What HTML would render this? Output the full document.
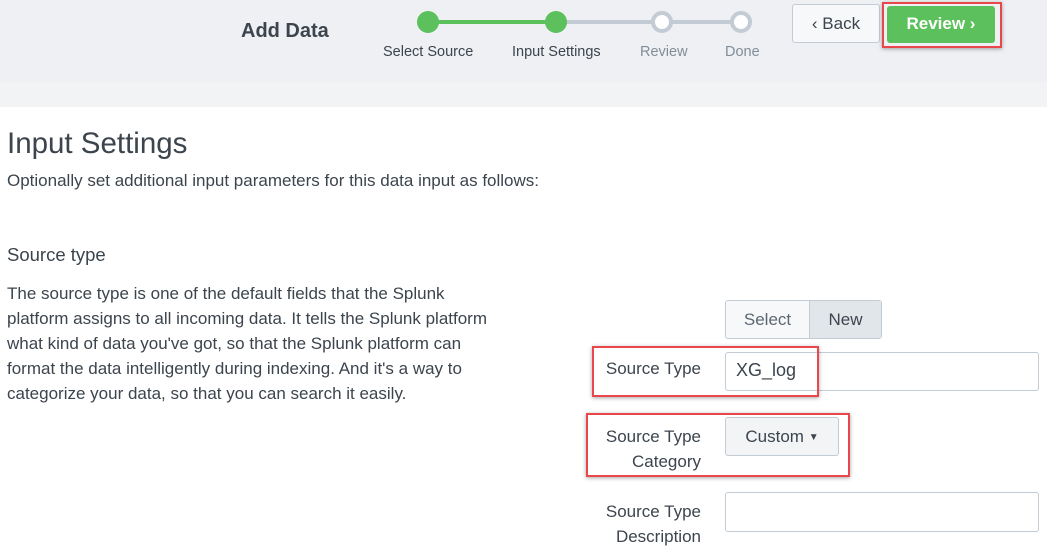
<!DOCTYPE html>
<html><head><style>
*{margin:0;padding:0;box-sizing:border-box}
body{width:1047px;height:549px;overflow:hidden;background:#fff;font-family:"Liberation Sans",sans-serif;color:#3c444d;position:relative}
.a{position:absolute}
.hdr{left:0;top:0;width:1047px;height:82px;background:#eef0f3;box-shadow:0 1px 3px rgba(0,0,0,.2)}
.band{left:0;top:82px;width:1047px;height:25px;background:#f2f3f5}
.lbl{font-size:14.5px;color:#5c6773}
.red{border:2px solid #e8474c;box-shadow:0 1px 4px rgba(0,0,0,.35)}
.inp{border:1px solid #c3cbd4;border-radius:3px;background:#fff}
.fl{font-size:17px;color:#3c444d;text-align:right;width:120px}
</style></head><body>
<div class="a hdr"></div>
<div class="a band"></div>
<div class="a" style="left:241px;top:20px;font-size:20px;font-weight:bold;color:#3c444d">Add Data</div>
<div class="a" style="left:428px;top:20px;width:128px;height:4px;background:#5cc05c"></div>
<div class="a" style="left:556px;top:20px;width:185px;height:4px;background:#c3cbd4"></div>
<div class="a" style="left:417px;top:11px;width:22px;height:22px;border-radius:50%;background:#5cc05c"></div>
<div class="a" style="left:545px;top:11px;width:22px;height:22px;border-radius:50%;background:#5cc05c"></div>
<div class="a" style="left:651px;top:11px;width:22px;height:22px;border-radius:50%;background:#fff;border:4px solid #c3cbd4"></div>
<div class="a" style="left:730px;top:11px;width:22px;height:22px;border-radius:50%;background:#fff;border:4px solid #c3cbd4"></div>
<div class="a lbl" style="left:383px;top:44px;color:#3c444d">Select Source</div>
<div class="a lbl" style="left:512px;top:44px;color:#3c444d">Input Settings</div>
<div class="a lbl" style="left:640px;top:44px;color:#818d99">Review</div>
<div class="a lbl" style="left:725px;top:44px;color:#818d99">Done</div>
<div class="a" style="left:792px;top:4px;width:88px;height:39px;border:1px solid #c3cbd4;border-radius:3px;background:#f7f8fa;font-size:17px;line-height:37px;text-align:center;color:#3c444d">‹ Back</div>
<div class="a red" style="left:882px;top:2px;width:120px;height:46px"></div>
<div class="a" style="left:887px;top:6px;width:108px;height:37px;border-radius:3px;background:#5cc05c;font-size:17px;font-weight:bold;line-height:35px;text-align:center;color:#fff">Review ›</div>

<div class="a" style="left:7px;top:127px;font-size:29.5px;color:#3c444d">Input Settings</div>
<div class="a" style="left:7px;top:171px;font-size:17px;white-space:nowrap">Optionally set additional input parameters for this data input as follows:</div>
<div class="a" style="left:7px;top:244px;font-size:18.5px">Source type</div>
<div class="a" style="left:7px;top:281px;font-size:17px;line-height:25px;white-space:nowrap">The source type is one of the default fields that the Splunk<br>platform assigns to all incoming data. It tells the Splunk platform<br>what kind of data you've got, so that the Splunk platform can<br>format the data intelligently during indexing. And it's a way to<br>categorize your data, so that you can search it easily.</div>

<div class="a" style="left:725px;top:300px;width:157px;height:39px;border:1px solid #c3cbd4;border-radius:3px;background:#f7f8fa;display:flex;font-size:17px;line-height:37px">
<div style="width:83px;text-align:center;color:#5c6773">Select</div><div style="flex:1;text-align:center;background:#e1e6eb;border-left:1px solid #c3cbd4">New</div></div>

<div class="a inp" style="left:725px;top:352px;width:314px;height:39px"></div>
<div class="a" style="left:736px;top:360px;font-size:18px">XG_log</div>
<div class="a fl" style="left:581px;top:359px">Source Type</div>
<div class="a red" style="left:592px;top:346px;width:227px;height:51px"></div>

<div class="a" style="left:725px;top:417px;width:114px;height:39px;border:1px solid #c3cbd4;border-radius:3px;background:#f2f4f6;font-size:17px;line-height:37px;text-align:center">Custom <span style="font-size:10px;vertical-align:2px">▼</span></div>
<div class="a fl" style="left:581px;top:424px;line-height:25px">Source Type<br>Category</div>
<div class="a red" style="left:586px;top:413px;width:264px;height:64px"></div>

<div class="a inp" style="left:725px;top:492px;width:314px;height:40px"></div>
<div class="a fl" style="left:581px;top:499px;line-height:25px">Source Type<br>Description</div>
</body></html>
